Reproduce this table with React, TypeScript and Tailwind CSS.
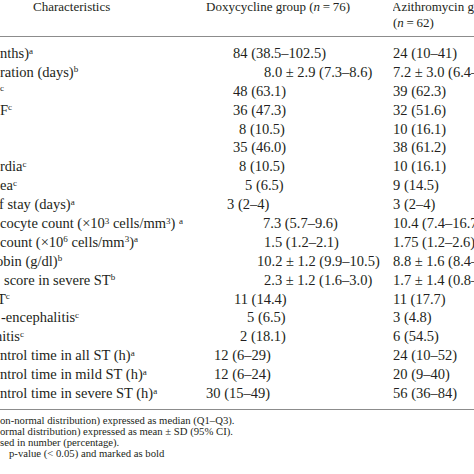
import React from "react";

type Row = { label: React.ReactNode; lx: string; doxy: string; dx: string; azi: string };

const S = ({ children }: { children: React.ReactNode }) => (
  <sup className="text-[9px]">{children}</sup>
);

const rows: Row[] = [
  { label: <>nths)<S>a</S></>, lx: "pl-0", doxy: "84 (38.5–102.5)", dx: "pl-[27px]", azi: "24 (10–41)" },
  { label: <>ration (days)<S>b</S></>, lx: "pl-0", doxy: "8.0 ± 2.9 (7.3–8.6)", dx: "pl-[58px]", azi: "7.2 ± 3.0 (6.4–7.9)" },
  { label: <S>c</S>, lx: "pl-0", doxy: "48 (63.1)", dx: "pl-[27px]", azi: "39 (62.3)" },
  { label: <>F<S>c</S></>, lx: "pl-0", doxy: "36 (47.3)", dx: "pl-[27px]", azi: "32 (51.6)" },
  { label: <></>, lx: "pl-0", doxy: "8 (10.5)", dx: "pl-[33px]", azi: "10 (16.1)" },
  { label: <></>, lx: "pl-0", doxy: "35 (46.0)", dx: "pl-[27px]", azi: "38 (61.2)" },
  { label: <>rdia<S>c</S></>, lx: "pl-0", doxy: "8 (10.5)", dx: "pl-[33px]", azi: "10 (16.1)" },
  { label: <>ea<S>c</S></>, lx: "pl-0", doxy: "5 (6.5)", dx: "pl-[39px]", azi: "9 (14.5)" },
  { label: <>f stay (days)<S>a</S></>, lx: "-ml-[1px]", doxy: "3 (2–4)", dx: "pl-[21px]", azi: "3 (2–4)" },
  {
    label: <>cocyte count (×10<S>3</S> cells/mm<S>3</S>) <S>a</S></>,
    lx: "pl-0",
    doxy: "7.3 (5.7–9.6)",
    dx: "pl-[57px]",
    azi: "10.4 (7.4–16.7)",
  },
  {
    label: <>count (×10<S>6</S> cells/mm<S>3</S>)<S>a</S></>,
    lx: "pl-0",
    doxy: "1.5 (1.2–2.1)",
    dx: "pl-[58px]",
    azi: "1.75 (1.2–2.6)",
  },
  { label: <>obin (g/dl)<S>b</S></>, lx: "-ml-[4px]", doxy: "10.2 ± 1.2 (9.9–10.5)", dx: "pl-[51px]", azi: "8.8 ± 1.6 (8.4–9.2)" },
  { label: <>score in severe ST<S>b</S></>, lx: "pl-[4px]", doxy: "2.3 ± 1.2 (1.6–3.0)", dx: "pl-[58px]", azi: "1.7 ± 1.4 (0.8–2.6)" },
  { label: <>T<S>c</S></>, lx: "-ml-[3px]", doxy: "11 (14.4)", dx: "pl-[28px]", azi: "11 (17.7)" },
  { label: <>-encephalitis<S>c</S></>, lx: "pl-[1px]", doxy: "5 (6.5)", dx: "pl-[41px]", azi: "3 (4.8)" },
  { label: <>nitis<S>c</S></>, lx: "-ml-[5px]", doxy: "2 (18.1)", dx: "pl-[34px]", azi: "6 (54.5)" },
  { label: <>ntrol time in all ST (h)<S>a</S></>, lx: "pl-0", doxy: "12 (6–29)", dx: "pl-[8px]", azi: "24 (10–52)" },
  { label: <>ntrol time in mild ST (h)<S>a</S></>, lx: "pl-0", doxy: "12 (6–24)", dx: "pl-[8px]", azi: "20 (9–40)" },
  { label: <>ntrol time in severe ST (h)<S>a</S></>, lx: "pl-0", doxy: "30 (15–49)", dx: "pl-0", azi: "56 (36–84)" },
];

export default function App() {
  return (
    <div className="w-[474px] h-[474px] overflow-hidden bg-white text-[#231f20] font-['Liberation_Serif',serif]">
      <div className="grid grid-cols-[206px_187px_81px] text-[13px] leading-[16px] -mt-[1px]">
        <div className="pl-[33px] whitespace-nowrap">Characteristics</div>
        <div className="whitespace-nowrap">
          Doxycycline group (<i>n</i>{"\u2009"}={"\u2009"}76)
        </div>
        <div className="whitespace-nowrap overflow-hidden">
          <div className="-ml-[1px]">Azithromycin group</div>
          <div>
            (<i>n</i>{"\u2009"}={"\u2009"}62)
          </div>
        </div>
      </div>
      <div className="mt-[5px] h-px bg-[#8c8c8c]" />
      <div className="pt-[7px] pb-[6px] text-[14.5px]">
        {rows.map((r, i) => (
          <div key={i} className="grid grid-cols-[206px_187px_81px] h-[18.9px] leading-[18.9px] whitespace-nowrap">
            <div className="overflow-hidden">
              <div className={r.lx}>{r.label}</div>
            </div>
            <div className={r.dx}>{r.doxy}</div>
            <div className="overflow-hidden">{r.azi}</div>
          </div>
        ))}
      </div>
      <div className="h-px bg-[#8c8c8c]" />
      <div className="pt-[5px] text-[10.7px] leading-[11px] whitespace-nowrap">
        <div>on-normal distribution) expressed as median (Q1–Q3).</div>
        <div>ormal distribution) expressed as mean ± SD (95% CI).</div>
        <div>sed in number (percentage).</div>
        <div className="pl-[9px]">p-value (&lt; 0.05) and marked as bold</div>
      </div>
    </div>
  );
}
